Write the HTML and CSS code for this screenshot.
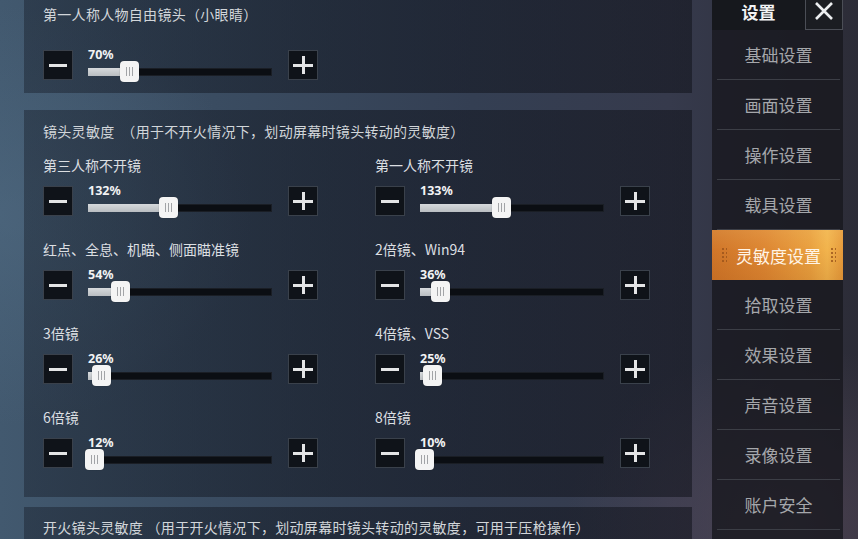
FILE: index.html
```html
<!DOCTYPE html>
<html lang="zh-CN">
<head>
<meta charset="utf-8">
<title>灵敏度设置</title>
<link rel="stylesheet" href="styles.css">
</head>
<body>
<div class="screen">
  <main class="content">
    <section class="panel panel-top">
      <div class="panel-title">第一人称人物自由镜头（小眼睛）</div>
      <div class="control">
        <div class="btn btn-minus"><span class="bar-h"></span></div>
        <div class="slider">
          <div class="pct">70%</div>
          <div class="track"><div class="fill" style="width:42px"></div><div class="thumb" style="left:32px"></div></div>
        </div>
        <div class="btn btn-plus"><span class="bar-h"></span><span class="bar-v"></span></div>
      </div>
    </section>

    <section class="panel panel-main">
      <div class="panel-title">镜头灵敏度&nbsp;&nbsp;（用于不开火情况下，划动屏幕时镜头转动的灵敏度）</div>
      <div class="grid">
        <div class="setting">
          <div class="label">第三人称不开镜</div>
          <div class="control">
            <div class="btn btn-minus"><span class="bar-h"></span></div>
            <div class="slider">
              <div class="pct">132%</div>
              <div class="track"><div class="fill" style="width:81px"></div><div class="thumb" style="left:71px"></div></div>
            </div>
            <div class="btn btn-plus"><span class="bar-h"></span><span class="bar-v"></span></div>
          </div>
        </div>
        <div class="setting">
          <div class="label">第一人称不开镜</div>
          <div class="control">
            <div class="btn btn-minus"><span class="bar-h"></span></div>
            <div class="slider">
              <div class="pct">133%</div>
              <div class="track"><div class="fill" style="width:82px"></div><div class="thumb" style="left:72px"></div></div>
            </div>
            <div class="btn btn-plus"><span class="bar-h"></span><span class="bar-v"></span></div>
          </div>
        </div>
        <div class="setting">
          <div class="label">红点、全息、机瞄、侧面瞄准镜</div>
          <div class="control">
            <div class="btn btn-minus"><span class="bar-h"></span></div>
            <div class="slider">
              <div class="pct">54%</div>
              <div class="track"><div class="fill" style="width:33px"></div><div class="thumb" style="left:23px"></div></div>
            </div>
            <div class="btn btn-plus"><span class="bar-h"></span><span class="bar-v"></span></div>
          </div>
        </div>
        <div class="setting">
          <div class="label">2倍镜、Win94</div>
          <div class="control">
            <div class="btn btn-minus"><span class="bar-h"></span></div>
            <div class="slider">
              <div class="pct">36%</div>
              <div class="track"><div class="fill" style="width:21px"></div><div class="thumb" style="left:11px"></div></div>
            </div>
            <div class="btn btn-plus"><span class="bar-h"></span><span class="bar-v"></span></div>
          </div>
        </div>
        <div class="setting">
          <div class="label">3倍镜</div>
          <div class="control">
            <div class="btn btn-minus"><span class="bar-h"></span></div>
            <div class="slider">
              <div class="pct">26%</div>
              <div class="track"><div class="fill" style="width:14px"></div><div class="thumb" style="left:4px"></div></div>
            </div>
            <div class="btn btn-plus"><span class="bar-h"></span><span class="bar-v"></span></div>
          </div>
        </div>
        <div class="setting">
          <div class="label">4倍镜、VSS</div>
          <div class="control">
            <div class="btn btn-minus"><span class="bar-h"></span></div>
            <div class="slider">
              <div class="pct">25%</div>
              <div class="track"><div class="fill" style="width:13px"></div><div class="thumb" style="left:3px"></div></div>
            </div>
            <div class="btn btn-plus"><span class="bar-h"></span><span class="bar-v"></span></div>
          </div>
        </div>
        <div class="setting">
          <div class="label">6倍镜</div>
          <div class="control">
            <div class="btn btn-minus"><span class="bar-h"></span></div>
            <div class="slider">
              <div class="pct">12%</div>
              <div class="track"><div class="fill" style="width:7px"></div><div class="thumb" style="left:-3px"></div></div>
            </div>
            <div class="btn btn-plus"><span class="bar-h"></span><span class="bar-v"></span></div>
          </div>
        </div>
        <div class="setting">
          <div class="label">8倍镜</div>
          <div class="control">
            <div class="btn btn-minus"><span class="bar-h"></span></div>
            <div class="slider">
              <div class="pct">10%</div>
              <div class="track"><div class="fill" style="width:5px"></div><div class="thumb" style="left:-5px"></div></div>
            </div>
            <div class="btn btn-plus"><span class="bar-h"></span><span class="bar-v"></span></div>
          </div>
        </div>
      </div>
    </section>

    <section class="panel panel-bottom">
      <div class="panel-title">开火镜头灵敏度 （用于开火情况下，划动屏幕时镜头转动的灵敏度，可用于压枪操作）</div>
    </section>
  </main>

  <aside class="sidebar">
    <div class="side-head">
      <div class="side-title">设置</div>
      <div class="side-close">
        <svg width="20" height="18" viewBox="0 0 20 18"><path d="M2 1 L18 17 M18 1 L2 17" stroke="#eceef0" stroke-width="2.6" fill="none"/></svg>
      </div>
    </div>
    <nav class="menu">
      <div class="item">基础设置</div>
      <div class="item">画面设置</div>
      <div class="item">操作设置</div>
      <div class="item">载具设置</div>
      <div class="item active"><span class="dots"></span><span>灵敏度设置</span><span class="dots"></span></div>
      <div class="item">拾取设置</div>
      <div class="item">效果设置</div>
      <div class="item">声音设置</div>
      <div class="item">录像设置</div>
      <div class="item">账户安全</div>
    </nav>
  </aside>
</div>
</body>
</html>
```

FILE: styles.css
```css
html, body {
  margin: 0;
  padding: 0;
  width: 858px;
  height: 539px;
  overflow: hidden;
}

body {
  font-family: "Noto Sans CJK SC", "Noto Sans", sans-serif;
  color: #d4d7db;
  background:
    radial-gradient(ellipse 320px 260px at 92% 98%, rgba(96, 80, 98, 0.55), transparent 70%),
    radial-gradient(ellipse 360px 300px at 0% 40%, rgba(84, 112, 136, 0.45), transparent 70%),
    linear-gradient(90deg, #42596f 0%, #3a4c61 25%, #343f53 55%, #363a4c 78%, #2c2c37 100%);
}

.screen {
  display: flex;
  height: 539px;
}

/* ---------- content ---------- */
.content {
  width: 712px;
  flex: none;
  box-sizing: border-box;
  padding-left: 24px;
  display: flex;
  flex-direction: column;
}

.panel {
  width: 668px;
  box-sizing: border-box;
  padding-left: 19px;
  background: linear-gradient(90deg, rgba(16, 20, 30, 0.38) 0%, rgba(16, 20, 30, 0.52) 45%, rgba(16, 18, 26, 0.55) 100%);
}

.panel-top {
  padding-top: 4px;
  padding-bottom: 13px;
}

.panel-main {
  margin-top: 17px;
  padding-top: 11px;
  padding-bottom: 29px;
}

.panel-bottom {
  margin-top: 10px;
  padding-top: 10px;
  flex: 1;
}

.panel-title {
  font-size: 14px;
  line-height: 20px;
  height: 20px;
  color: #d2d6da;
  letter-spacing: 0.3px;
  white-space: nowrap;
}

.panel-top .control {
  margin-top: 26px;
}

.grid {
  margin-top: 14px;
  display: grid;
  grid-template-columns: 275px 275px;
  column-gap: 57px;
  row-gap: 23px;
}

.label {
  font-size: 14px;
  line-height: 20px;
  height: 20px;
  color: #dcdfe2;
  white-space: nowrap;
  margin-bottom: 11px;
}

.control {
  display: flex;
  align-items: flex-start;
  height: 30px;
}

.btn {
  width: 30px;
  height: 30px;
  flex: none;
  box-sizing: border-box;
  border: 1px solid #3a414b;
  background: #0f1319;
  display: flex;
  align-items: center;
  justify-content: center;
  position: relative;
}

.btn-minus .bar-h {
  width: 18px;
  height: 3px;
  background: #e4e5e6;
}

.btn-plus .bar-h {
  width: 20px;
  height: 3px;
  background: #e4e5e6;
}

.btn-plus .bar-v {
  position: absolute;
  left: 13px;
  top: 5px;
  width: 3px;
  height: 18px;
  background: #e4e5e6;
}

.slider {
  width: 184px;
  margin-left: 15px;
  margin-right: 16px;
  display: flex;
  flex-direction: column;
}

.pct {
  font-family: "Noto Sans", "DejaVu Sans", sans-serif;
  font-weight: 700;
  font-size: 12.5px;
  line-height: 14px;
  height: 14px;
  margin-top: -2px;
  color: #f2f3f4;
}

.track {
  position: relative;
  margin-top: 6px;
  height: 8px;
  background: #0b0e13;
  box-shadow: inset 0 0 0 1px #1a1e25;
}

.fill {
  height: 8px;
  background: linear-gradient(180deg, #d6d9dc, #b9bdc1);
}

.thumb {
  position: absolute;
  top: -7px;
  width: 19px;
  height: 21px;
  box-sizing: border-box;
  border-radius: 4px;
  background: #f4f4f4;
  box-shadow: 0 0 1px rgba(0, 0, 0, 0.5);
  display: flex;
  align-items: center;
  justify-content: center;
}

.thumb::before {
  content: "";
  width: 7px;
  height: 9px;
  background: repeating-linear-gradient(90deg, #a2a4a7 0 1px, transparent 1px 3px);
}

/* ---------- sidebar ---------- */
.sidebar {
  width: 131px;
  flex: none;
  background: rgba(24, 24, 30, 0.8);
  display: flex;
  flex-direction: column;
}

.side-head {
  display: flex;
  height: 30px;
  flex: none;
}

.side-title {
  flex: 1;
  background: #16181d;
  color: #f1f2f3;
  font-size: 17px;
  font-weight: 700;
  line-height: 24px;
  text-align: center;
}

.side-close {
  width: 38px;
  box-sizing: border-box;
  border: 1px solid #4b4e56;
  border-top: none;
  background: #1b1d22;
  display: flex;
  align-items: flex-start;
  justify-content: center;
  padding-top: 2px;
}

.menu {
  display: flex;
  flex-direction: column;
}

.item {
  height: 50px;
  box-sizing: border-box;
  margin: 0 3px 0 5px;
  border-bottom: 1px solid #3c3e46;
  display: flex;
  align-items: center;
  justify-content: center;
  font-size: 17px;
  color: #a5a7ab;
}

.item.active {
  margin: 0;
  border-bottom: none;
  padding: 0 7px 0 9px;
  justify-content: space-between;
  color: #fff4e6;
  background:
    linear-gradient(180deg, rgba(255, 230, 160, 0.12), rgba(0, 0, 0, 0) 40%, rgba(120, 50, 0, 0.12)),
    linear-gradient(90deg, #d07629 0%, #dd8632 40%, #e9a03f 75%, #f2b44d 88%, #e69a3b 100%);
}

.dots {
  width: 6px;
  height: 17px;
  background-image: radial-gradient(circle, rgba(150, 80, 25, 0.75) 0.9px, transparent 1.3px);
  background-size: 4px 4px;
}
```
